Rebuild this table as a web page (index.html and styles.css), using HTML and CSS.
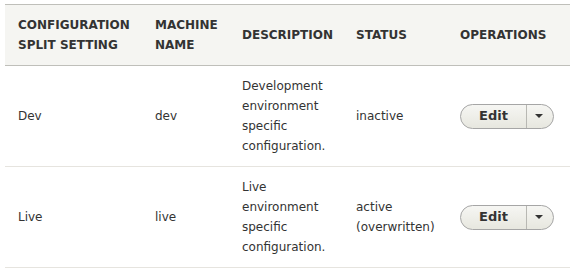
FILE: index.html
```html
<!DOCTYPE html>
<html lang="en">
<head>
  <meta charset="UTF-8" />
  <title>Configuration Split settings</title>
  <link rel="stylesheet" href="styles.css">
</head>
<body>
  <div class="page">
    <table class="split-table">
      <colgroup>
        <col class="col-label">
        <col class="col-machine">
        <col class="col-desc">
        <col class="col-status">
        <col class="col-ops">
      </colgroup>
      <thead>
        <tr>
          <th>Configuration split setting</th>
          <th>Machine name</th>
          <th>Description</th>
          <th>Status</th>
          <th>Operations</th>
        </tr>
      </thead>
      <tbody>
        <tr>
          <td>Dev</td>
          <td>dev</td>
          <td>Development environment specific configuration.</td>
          <td>inactive</td>
          <td>
            <div class="dropbutton">
              <a class="dropbutton-action" href="#">Edit</a>
              <button class="dropbutton-toggle" aria-label="List additional actions"><span class="arrow"></span></button>
            </div>
          </td>
        </tr>
        <tr>
          <td>Live</td>
          <td>live</td>
          <td>Live environment specific configuration.</td>
          <td>active (overwritten)</td>
          <td>
            <div class="dropbutton">
              <a class="dropbutton-action" href="#">Edit</a>
              <button class="dropbutton-toggle" aria-label="List additional actions"><span class="arrow"></span></button>
            </div>
          </td>
        </tr>
      </tbody>
    </table>
  </div>
</body>
</html>
```

FILE: styles.css
```css
* {
  box-sizing: border-box;
  margin: 0;
  padding: 0;
}

body {
  font-family: "DejaVu Sans", Verdana, sans-serif;
  font-size: 12px;
  color: #333;
  background: #fff;
}

.page {
  padding: 4px 0 0 5px;
}

.split-table {
  width: 100%;
  border-collapse: collapse;
  table-layout: fixed;
}

.col-label { width: 137px; }
.col-machine { width: 87px; }
.col-desc { width: 114px; }
.col-status { width: 104px; }
.col-ops { width: 123px; }

.split-table thead tr {
  background: #f5f5f2;
  border-top: 1px solid #bfbfba;
  border-bottom: 1px solid #bfbfba;
}

.split-table th {
  text-align: left;
  text-transform: uppercase;
  font-weight: bold;
  font-size: 12px;
  line-height: 20px;
  padding: 10px 12px 10px 13px;
  color: #333;
  vertical-align: middle;
}

.split-table tbody tr {
  border-bottom: 1px solid #e6e4df;
}

.split-table td {
  padding: 10px 12px 10px 13px;
  line-height: 20px;
  vertical-align: middle;
}

.dropbutton {
  display: inline-flex;
  align-items: stretch;
  height: 25px;
  border: 1px solid #a6a6a6;
  border-radius: 13px;
  background: linear-gradient(to bottom, #f6f6f3, #e7e7df);
  overflow: hidden;
}

.dropbutton-action {
  display: flex;
  align-items: center;
  justify-content: center;
  width: 66px;
  color: #333;
  font-size: 13px;
  font-weight: bold;
  text-decoration: none;
  border-right: 1px solid #b8b8b3;
}

.dropbutton-toggle {
  width: 26px;
  border: none;
  background: none;
  display: flex;
  align-items: center;
  justify-content: center;
  cursor: pointer;
}

.arrow {
  width: 0;
  height: 0;
  border-left: 4px solid transparent;
  border-right: 4px solid transparent;
  border-top: 4px solid #333;
  margin-right: 2px;
}
```
